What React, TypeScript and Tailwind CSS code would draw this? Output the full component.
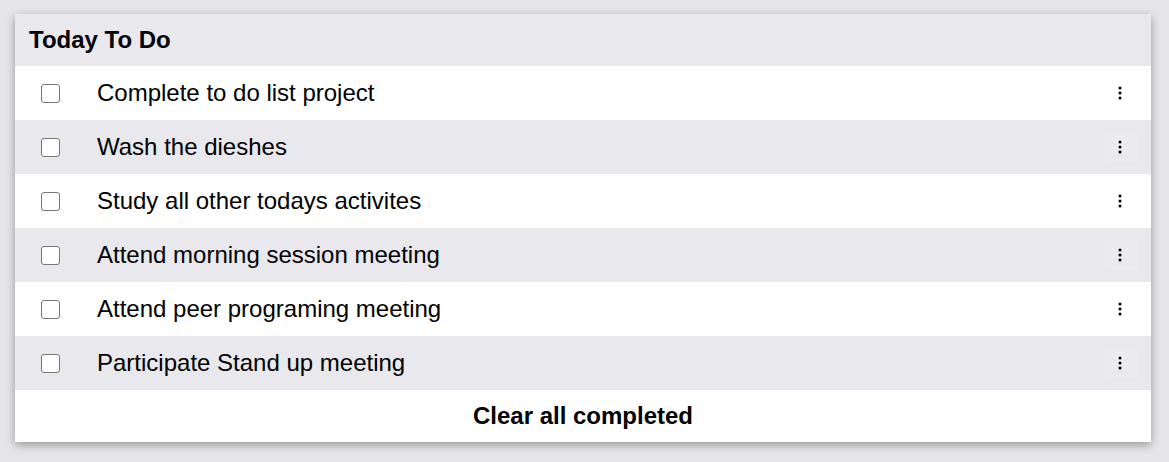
import React from "react";

const todos = [
  "Complete to do list project",
  "Wash the dieshes",
  "Study all other todays activites",
  "Attend morning session meeting",
  "Attend peer programing meeting",
  "Participate Stand up meeting",
];

function KebabIcon() {
  return (
    <svg width="4" height="16" viewBox="0 0 4 16">
      <circle cx="2" cy="3" r="1.5" fill="#000" />
      <circle cx="2" cy="8" r="1.5" fill="#000" />
      <circle cx="2" cy="13" r="1.5" fill="#000" />
    </svg>
  );
}

function TodoRow({ text, index }: { text: string; index: number }) {
  const striped = index % 2 === 1;
  return (
    <li
      className={`flex items-center h-[54px] pl-[26px] pr-[13px] ${
        striped ? "bg-[#e9e8ed]" : "bg-white"
      }`}
    >
      <input
        type="checkbox"
        className="appearance-none w-[19px] h-[19px] rounded-[3px] border border-[#767676] bg-white shrink-0"
      />
      <span className="ml-[37px] flex-1 text-[24px] text-black">{text}</span>
      <button className="flex items-center justify-center w-[33px] h-[30px] pr-[4px] bg-white/10">
        <KebabIcon />
      </button>
    </li>
  );
}

export default function App() {
  return (
    <div
      className="min-h-[462px] w-full bg-[#e6e6ea] pt-[14px] pl-[15px] pr-[18px]"
      style={{ fontFamily: '"Liberation Sans", Arial, sans-serif' }}
    >
      <div className="w-[1136px] bg-white shadow-[0_3px_9px_rgba(0,0,0,0.35)]">
        <div className="flex items-center h-[52px] px-[14px] bg-[#e9e8ed]">
          <h1 className="text-[24px] font-bold text-black">Today To Do</h1>
        </div>
        <ul>
          {todos.map((todo, index) => (
            <TodoRow text={todo} index={index} key={index} />
          ))}
        </ul>
        <div className="flex items-center justify-center h-[52px]">
          <button className="text-[24px] font-bold text-black">
            Clear all completed
          </button>
        </div>
      </div>
    </div>
  );
}
